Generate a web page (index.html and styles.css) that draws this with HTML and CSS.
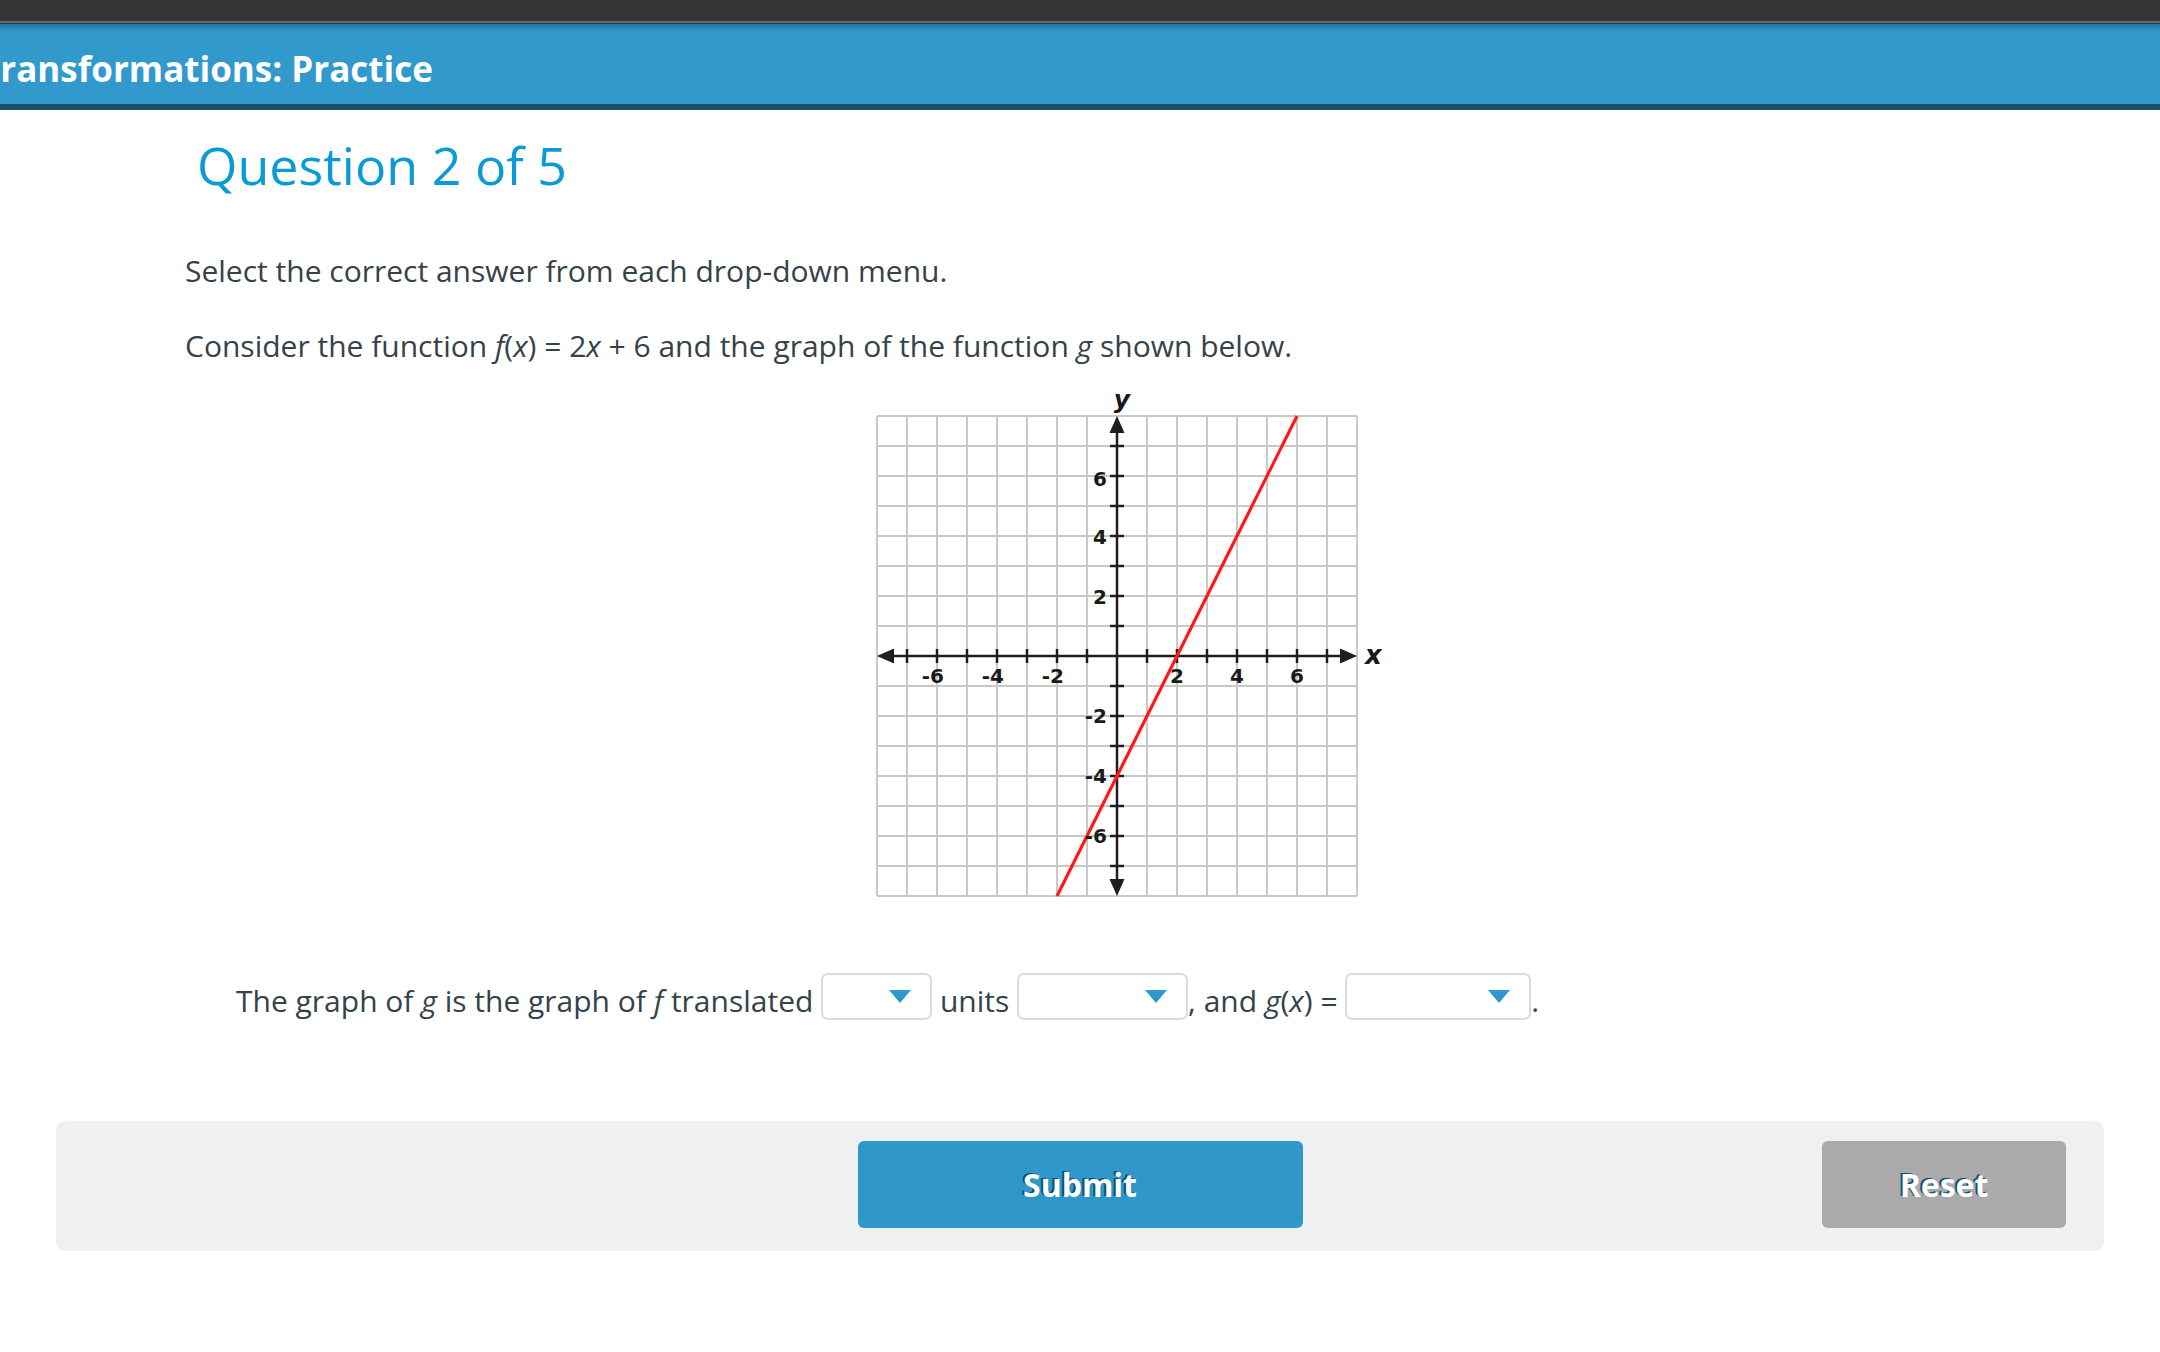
FILE: index.html
```html
<!DOCTYPE html>
<html>
<head>
<meta charset="utf-8">
<link rel="stylesheet" href="styles.css">
</head>
<body>
<div class="topbar"></div>
<header class="header"><h1 class="header-title">Transformations: Practice</h1></header>
<main class="main">
  <h2 class="qtitle">Question 2 of 5</h2>
  <p class="line l1">Select the correct answer from each drop-down menu.</p>
  <p class="line l2">Consider the function <i>f</i>(<i>x</i>) = 2<i>x</i> + 6 and the graph of the function <i>g</i> shown below.</p>
  <svg class="graph" width="516" height="512" viewBox="0 0 516 512" xmlns="http://www.w3.org/2000/svg">
    <g stroke="#c8c8c8" stroke-width="2" fill="none">
      <path d="M1 30V510M31 30V510M61 30V510M91 30V510M121 30V510M151 30V510M181 30V510M211 30V510M241 30V510M271 30V510M301 30V510M331 30V510M361 30V510M391 30V510M421 30V510M451 30V510M481 30V510"/>
      <path d="M1 30H481M1 60H481M1 90H481M1 120H481M1 150H481M1 180H481M1 210H481M1 240H481M1 270H481M1 300H481M1 330H481M1 360H481M1 390H481M1 420H481M1 450H481M1 480H481M1 510H481"/>
    </g>
    <g stroke="#1e1e1e" stroke-width="2.5" fill="none">
      <path d="M14 270H468M241 43V497"/>
      <path d="M31 263V277M61 263V277M91 263V277M121 263V277M151 263V277M181 263V277M211 263V277M271 263V277M301 263V277M331 263V277M361 263V277M391 263V277M421 263V277M451 263V277"/>
      <path d="M234 60H248M234 90H248M234 120H248M234 150H248M234 180H248M234 210H248M234 240H248M234 300H248M234 330H248M234 360H248M234 390H248M234 420H248M234 450H248M234 480H248"/>
    </g>
    <g fill="#1e1e1e">
      <polygon points="1,270 18,262.5 18,277.5"/>
      <polygon points="481,270 464,262.5 464,277.5"/>
      <polygon points="241,30 233.5,47 248.5,47"/>
      <polygon points="241,510 233.5,493 248.5,493"/>
    </g>
    <line x1="181" y1="510" x2="421" y2="30" stroke="#ff1a1a" stroke-width="3.2"/>
    <g class="lbl" font-size="20">
      <text x="68" y="297" text-anchor="end">-6</text>
      <text x="128" y="297" text-anchor="end">-4</text>
      <text x="188" y="297" text-anchor="end">-2</text>
      <text x="301" y="297" text-anchor="middle">2</text>
      <text x="361" y="297" text-anchor="middle">4</text>
      <text x="421" y="297" text-anchor="middle">6</text>
      <text x="231" y="100" text-anchor="end">6</text>
      <text x="231" y="158" text-anchor="end">4</text>
      <text x="231" y="218" text-anchor="end">2</text>
      <text x="231" y="337" text-anchor="end">-2</text>
      <text x="231" y="397" text-anchor="end">-4</text>
      <text x="231" y="457" text-anchor="end">-6</text>
    </g>
    <text class="axlbl" x="246" y="22" text-anchor="middle" font-size="25">y</text>
    <text class="axlbl" x="489" y="278" font-size="26">x</text>
  </svg>
  <div class="sentence">The graph of <i>g</i> is the graph of <i>f</i> translated <span class="dd dd1"><span class="tri"></span></span> units <span class="dd dd2"><span class="tri"></span></span>, and <i>g</i>(<i>x</i>) = <span class="dd dd3"><span class="tri"></span></span>.</div>
</main>
<div class="panel">
  <button class="btn submit">Submit</button>
  <button class="btn reset">Reset</button>
</div>
</body>
</html>
```

FILE: styles.css
```css
html, body {
  margin: 0;
  padding: 0;
  background: #ffffff;
}
body {
  font-family: "Open Sans", "Noto Sans", sans-serif;
  color: #36424a;
  width: 2160px;
  overflow: hidden;
}
.topbar {
  height: 21px;
  background: #353535;
  border-bottom: 2px solid #6a6a6a;
}
.header {
  height: 70px;
  padding-top: 10px;
  border-top: 1px solid #2a3c46;
  background: linear-gradient(#2873a0 0, #3199cc 8px, #3199cc 100%);
  border-bottom: 6px solid #1c4e67;
  overflow: hidden;
}
.header-title {
  margin: 0 0 0 -20px;
  font-size: 35px;
  font-weight: 700;
  line-height: 70px;
  color: #ffffff;
  white-space: nowrap;
}
.main {
  padding-left: 185px;
}
.qtitle {
  margin: 24px 0 0 12px;
  font-size: 52px;
  font-weight: 400;
  line-height: 62px;
  color: #0a9bd7;
}
.line {
  margin: 0;
  font-size: 30px;
  line-height: 40px;
}
.l1 {
  margin-top: 55px;
}
.l2 {
  margin-top: 35px;
}
.graph {
  display: block;
  margin: 20px 0 0 691px;
}
.lbl text {
  font-family: "DejaVu Sans", Verdana, sans-serif;
  font-weight: 700;
  fill: #1a1a1a;
}
.axlbl {
  font-family: "DejaVu Sans", Verdana, sans-serif;
  font-weight: 700;
  font-style: italic;
  fill: #1a1a1a;
}
.sentence {
  margin: 75px 0 0 51px;
  height: 52px;
  font-size: 30px;
  line-height: 48px;
  white-space: nowrap;
}
.dd {
  display: inline-block;
  position: relative;
  box-sizing: border-box;
  height: 47px;
  vertical-align: -8px;
  background: #ffffff;
  border: 2px solid #d9dcdf;
  border-radius: 7px;
}
.dd1 { width: 111px; }
.dd2 { width: 171px; }
.dd3 { width: 186px; }
.tri {
  position: absolute;
  right: 19px;
  top: 15px;
  width: 0;
  height: 0;
  border-left: 11px solid transparent;
  border-right: 11px solid transparent;
  border-top: 13px solid #2f98cd;
}
.panel {
  margin: 96px 56px 0 56px;
  height: 130px;
  box-sizing: border-box;
  padding-top: 20px;
  background: #eff0f2;
  border-radius: 9px;
  display: grid;
  grid-template-columns: 1fr 445px 1fr;
  align-items: start;
}
.btn {
  height: 87px;
  border: none;
  border-radius: 6px;
  font-family: "Open Sans", "Noto Sans", sans-serif;
  font-size: 32px;
  font-weight: 700;
  color: #ffffff;
  text-shadow: -2px -1px 0 #0b4f70;
  cursor: pointer;
}
.submit {
  grid-column: 2;
  width: 445px;
  background: #2f97c9;
}
.reset {
  grid-column: 3;
  justify-self: end;
  margin-right: 38px;
  width: 244px;
  background: #aaaaaa;
}
```
